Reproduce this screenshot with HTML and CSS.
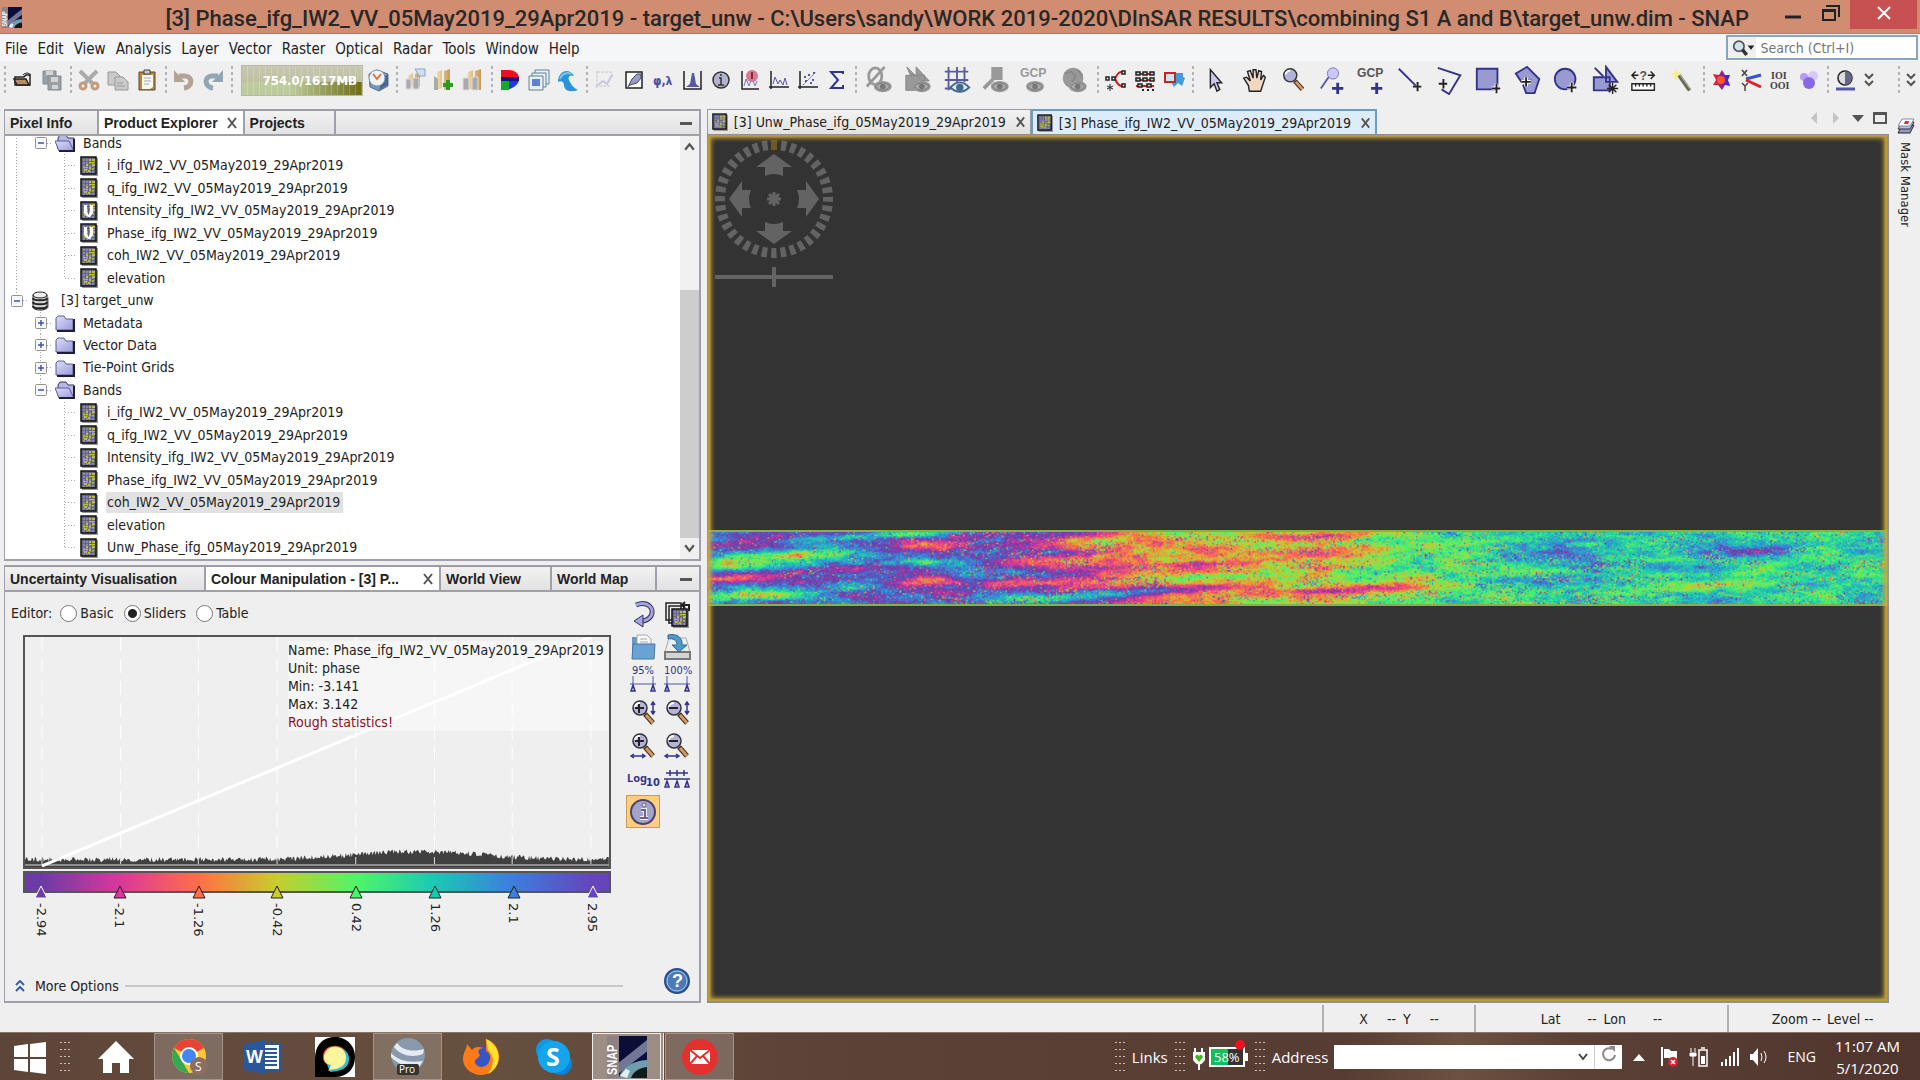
FILE: index.html
```html
<!DOCTYPE html>
<html lang="en">
<head>
    <meta charset="UTF-8">
    <meta name="viewport" content="width=device-width, initial-scale=1.0">
    <title>SNAP</title>
    <link rel="stylesheet" href="styles.css">
</head>
<body>
    <!-- Shared icons -->
    <svg class="defs" width="0" height="0">
        <defs>
            <linearGradient id="folderFill" x1="0" y1="0" x2="1" y2="1"><stop offset="0" stop-color="#dcdcff"/><stop offset="1" stop-color="#9a9ad8"/></linearGradient>
            <linearGradient id="wood" x1="0" x2="1"><stop offset="0" stop-color="#f4dcae"/><stop offset="1" stop-color="#c79a58"/></linearGradient>
            <linearGradient id="rainbow" x1="0" x2="1"><stop offset="0" stop-color="#f22"/><stop offset="1" stop-color="#22f"/></linearGradient>
            <pattern id="bandGrid" width="3" height="3" patternUnits="userSpaceOnUse"><rect width="3" height="3" fill="#66667a"/><rect width="2" height="2" fill="#8585b8"/></pattern>
            <symbol id="i-band" viewBox="0 0 18 20">
                <rect x="2" y="2" width="16" height="18" fill="#999"/>
                <rect x="1" y="1" width="15" height="17" fill="url(#bandGrid)" stroke="#111" stroke-width="1.500"/>
                <path d="M9 3h2v2h-2zM12 3h3v2h-3zM9 6h6v1H9zM12 8h3v2h-3zM6 8h2v2H6zM3 11h5v1H3zM9 11h2v2H9zM4 13h3v2H4zM8 14h2v2H8zM12 12h2v1h-2z" fill="#c4c430" opacity=".9"/>
            </symbol>
            <symbol id="i-vband" viewBox="0 0 18 20">
                <use href="#i-band" width="18" height="20"/>
                <path d="M4 4h3v7l1.500 3 1.500-3V4h3v8l-3 4H8l-4-4z" fill="#fff"/>
            </symbol>
            <symbol id="i-folder" viewBox="0 0 20 18">
                <path d="M1 16V4l2-2h6l2 3h7v11z" fill="url(#folderFill)" stroke="#5c5c90"/>
                <path d="M2 17h17V5" fill="none" stroke="#1d1d3c" stroke-width="2"/>
            </symbol>
            <symbol id="i-folder-open" viewBox="0 0 20 18">
                <path d="M3 15V4l2-3h6l2 3h6v12z" fill="#b9b9e6" stroke="#33335c"/>
                <path d="M0 7h14l5 10H4z" fill="url(#folderFill)" stroke="#5c5c90"/>
                <path d="M4 17h15V5" fill="none" stroke="#1d1d3c" stroke-width="2"/>
            </symbol>
            <symbol id="i-db" viewBox="0 0 18 20">
                <path d="M4 18c6 3 13 1 13-3V6z" fill="#aaa"/>
                <path d="M1 4v12c0 4 14 4 14 0V4z" fill="#d8d8d8" stroke="#222"/>
                <path d="M1 7c0 3 14 3 14 0M1 11c0 3 14 3 14 0M1 15c0 3 14 3 14 0" fill="none" stroke="#222" stroke-width="2"/>
                <ellipse cx="8" cy="4" rx="7" ry="3" fill="#eee" stroke="#222"/>
            </symbol>
            <symbol id="i-minus" viewBox="0 0 12 12"><rect x=".5" y=".5" width="11" height="11" rx="1" fill="#f8f8f8" stroke="#929292"/><path d="M3 6h6" stroke="#3b58a8" stroke-width="1.500"/></symbol>
            <symbol id="i-plus" viewBox="0 0 12 12"><rect x=".5" y=".5" width="11" height="11" rx="1" fill="#f8f8f8" stroke="#929292"/><path d="M3 6h6M6 3v6" stroke="#3b58a8" stroke-width="1.500"/></symbol>
            <symbol id="i-x" viewBox="0 0 12 12"><path d="M2 1l8 10M10 1L2 11" stroke="#555" stroke-width="2" fill="none"/></symbol>
            <symbol id="i-eye" viewBox="0 0 20 14">
                <ellipse cx="10" cy="7" rx="9.500" ry="6" fill="#9a9a9a"/><path d="M2 7q8-8 16 0q-8 8-16 0z" fill="#aaa" stroke="#777"/><circle cx="10" cy="7" r="3" fill="#777"/>
            </symbol>
            <symbol id="i-chev" viewBox="0 0 10 14"><path d="M1 1l4 4 4-4M1 8l4 4 4-4" fill="none" stroke="#555" stroke-width="2"/></symbol>
            <symbol id="i-lens" viewBox="0 0 26 28">
                <circle cx="10" cy="9" r="7" fill="#b3b3da" stroke="#333" stroke-width="1.500"/><path d="M5 8a5 5 0 015-4" stroke="#fff" stroke-width="2" fill="none"/>
                <path d="M15 15l8 9" stroke="#4a2c1a" stroke-width="5"/><path d="M16 16l7 8" stroke="#d09a68" stroke-width="3"/>
            </symbol>
            <symbol id="i-snap" viewBox="0 0 40 54">
                <rect width="40" height="54" fill="#0b0e38"/><rect width="12" height="54" fill="#8c8286"/>
                <path d="M12 34L40 5v15L12 48z" fill="#737795"/><path d="M12 54c2-13 14-22 28-23v23z" fill="#6f9eb0"/><path d="M24 54c2-8 8-13 16-14v14z" fill="#101c1c"/><path d="M13 51l6-9 4 3-3 9z" fill="#e4eeee"/>
                <text x="-50" y="10" transform="rotate(-90)" fill="#fff" font-family="Liberation Sans" font-size="14" font-weight="bold">SNAP</text>
            </symbol>
        </defs>
    </svg>

    <header class="titlebar">
        <svg class="title-icon" viewBox="0 0 40 54" preserveAspectRatio="none"><use href="#i-snap" width="40" height="54"/></svg>
        <h1>[3] Phase_ifg_IW2_VV_05May2019_29Apr2019 - target_unw - C:\Users\sandy\WORK 2019-2020\DInSAR RESULTS\combining S1 A and B\target_unw.dim - SNAP</h1>
        <div class="window-buttons">
            <button class="win" aria-label="Minimize"><svg width="18" height="20" viewBox="0 0 18 20"><path d="M1 14h16" stroke="#222" stroke-width="3"/></svg></button>
            <button class="win" aria-label="Restore"><svg width="20" height="18" viewBox="0 0 20 18"><path d="M2 6h12v10H2zM1 7h14M5 2h13v11" stroke="#222" stroke-width="2" fill="none"/></svg></button>
            <button class="win win-close" aria-label="Close"><svg width="16" height="14" viewBox="0 0 16 14"><path d="M2 1l12 12M14 1L2 13" stroke="#fff" stroke-width="2"/></svg></button>
        </div>
    </header>

    <nav class="menubar">
        <a href="#">File</a><a href="#">Edit</a><a href="#">View</a><a href="#">Analysis</a><a href="#">Layer</a><a href="#">Vector</a><a href="#">Raster</a><a href="#">Optical</a><a href="#">Radar</a><a href="#">Tools</a><a href="#">Window</a><a href="#">Help</a>
        <label class="search">
            <svg width="26" height="20" viewBox="0 0 26 20"><circle cx="8" cy="8" r="6" fill="#cfe2f2" stroke="#555" stroke-width="2"/><path d="M12 12l5 6" stroke="#333" stroke-width="4"/><path d="M18 7h8l-4 5z" fill="#222"/></svg>
            <input type="text" placeholder="Search (Ctrl+I)" aria-label="Search">
        </label>
    </nav>

    <div class="toolbar">
        <i class="sep"></i>
        <button aria-label="Open"><svg viewBox="0 0 24 24"><path d="M4 9h9l2-2h4v10H4z" fill="#eee" stroke="#222" stroke-width="1.500"/><path d="M3 11h12l3 6H6z" fill="#b88b62" stroke="#222" stroke-width="1.500"/><path d="M12 7q4-4 8 0" fill="none" stroke="#222"/></svg></button>
        <button aria-label="Save all"><svg viewBox="0 0 24 24"><g fill="#9aa0a6" stroke="#848a90"><path d="M3 3h13v13H3z"/><path d="M8 8h13v14H8z"/></g><path d="M6 3h7v4H6zM11 9h7v5h-7zM12 17h6v4h-6z" fill="#d2d4d6"/></svg></button>
        <i class="sep"></i>
        <button aria-label="Cut"><svg viewBox="0 0 24 24"><path d="M3 3l12 12M20 3L8 15" stroke="#aaa" stroke-width="4"/><g fill="none" stroke="#c49c7c" stroke-width="3"><circle cx="6" cy="18" r="3"/><circle cx="18" cy="18" r="3"/></g></svg></button>
        <button aria-label="Copy"><svg viewBox="0 0 24 24"><g fill="#c9c9c9" stroke="#989898"><path d="M2 4h8l4 4v9H2z"/><path d="M9 9h8l5 5v8H9z"/></g><path d="M11 15h6M11 18h8" stroke="#989898"/></svg></button>
        <button aria-label="Paste"><svg viewBox="0 0 24 24"><path d="M4 4h16v18H4z" fill="#b98d2c" stroke="#544"/><path d="M7 7h11v12l-3 2H7z" fill="#f6f6f2"/><path d="M9 2h6v4H9z" fill="#ccc" stroke="#444"/><path d="M9 10h7M9 13h7M9 16h5" stroke="#aaa"/></svg></button>
        <i class="sep"></i>
        <button aria-label="Undo"><svg viewBox="0 0 24 24"><path d="M7 8h6c8 0 8 11-1 12" fill="none" stroke="#b3a394" stroke-width="5"/><path d="M2 2v12h11z" fill="#b3a394"/></svg></button>
        <button aria-label="Redo"><svg viewBox="0 0 24 24"><path d="M17 8h-6c-8 0-8 11 1 12" fill="none" stroke="#91a8b4" stroke-width="5"/><path d="M22 2v12H11z" fill="#91a8b4"/></svg></button>
        <i class="sep"></i>
        <div class="memory">754.0/1617MB</div>
        <button aria-label="Profile"><svg viewBox="0 0 24 24"><path d="M3 6l8-4 11 4v12l-9 5-9-4z" fill="#7898bd" stroke="#4f6f96"/><path d="M13 22l9-5V6l-5 4z" fill="#46688f"/><circle cx="11" cy="10" r="8" fill="#eef3f8" stroke="#7d93ad"/><path d="M7 6l4 5 4-5" fill="none" stroke="#e0703a" stroke-width="2"/></svg></button>
        <i class="sep"></i>
        <button aria-label="Product library"><svg viewBox="0 0 24 24"><path d="M5 8l5-3v13l-5 4zM12 6l5-2v14l-5 4z" fill="url(#wood)"/><path d="M3 11h5v10H3zM10 10h6v11h-6z" fill="#aaa" stroke="#ddd"/><path d="M12 1h10v7h-6z" fill="#cfe0f6" stroke="#8aa4c8"/></svg></button>
        <button aria-label="Add product"><svg viewBox="0 0 24 24"><path d="M5 4l5-2v18l-5 2zM12 3l6-2v18l-6 3z" fill="url(#wood)"/><path d="M2 8l4 3v11H2z" fill="#aaa"/><path d="M16 12v10M11 17h10" stroke="#2c9a1c" stroke-width="4"/></svg></button>
        <button aria-label="Products"><svg viewBox="0 0 24 24"><path d="M7 4l5-2v19H5zM14 3l6-2v21h-7z" fill="url(#wood)"/><path d="M2 10h6v12H2zM11 9h6v13h-6z" fill="#aaa" stroke="#ddd"/></svg></button>
        <i class="sep"></i>
        <button aria-label="RGB"><svg viewBox="0 0 24 24"><path d="M3 2h8c6 0 10 4 10 8H3z" fill="#e8121c"/><path d="M9 11h12c0 5-5 9-12 11z" fill="#1d39d8"/><path d="M3 11h8v11H3z" fill="#18a82c"/><path d="M3 9h18v4H3z" fill="#16177a"/></svg></button>
        <button aria-label="Image stack"><svg viewBox="0 0 24 24"><g fill="#e8f0f4" stroke="#5f8394"><path d="M8 2h14v14H8z"/><path d="M5 5h14v14H5z"/><path d="M2 8h14v14H2z"/></g><path d="M5 11h8v7H5z" fill="#5d80da"/></svg></button>
        <button aria-label="Wave"><svg viewBox="0 0 24 24"><path d="M2 14C2 3 13-1 18 8c-5-2-7 2-4 6 2 4 4 6 8 8-9 3-14 0-14-5 0-3-3-5-6-3z" fill="#2c93d4"/><path d="M4 11c2-6 8-7 11-5" fill="none" stroke="#7cc4ee" stroke-width="2"/></svg></button>
        <i class="sep"></i>
        <button aria-label="Profile plot"><svg viewBox="0 0 24 24"><path d="M4 3v17M2 18h15M4 4h14l2 5" fill="none" stroke="#c4c4ce" stroke-dasharray="3 1"/><path d="M5 17l5-4 4 3 5-9" fill="none" stroke="#c8c8dc" stroke-width="2"/></svg></button>
        <button aria-label="Spectrum"><svg viewBox="0 0 24 24"><path d="M4 4h16v16H4z" fill="#fff" stroke="#222" stroke-width="1.500"/><path d="M6 19l4-8 5-5h4v4l-4 5-7 2z" fill="#9c9cc4" stroke="#446"/></svg></button>
        <button aria-label="Geo coding"><svg viewBox="0 0 24 24"><text x="2" y="17" class="glyph">φ,λ</text></svg></button>
        <button aria-label="Histogram"><svg viewBox="0 0 24 24"><path d="M4 3v18h17V3M4 21h17" fill="none" stroke="#222" stroke-width="1.500"/><path d="M6 19l4-3 2-11h2l2 11 4 3z" fill="#5858a8"/></svg></button>
        <button aria-label="Information"><svg viewBox="0 0 24 24"><circle cx="12" cy="12" r="8" fill="#b3b3cc" stroke="#333" stroke-width="1.500"/><path d="M12 6v2M10 10h2v7M9 17h6" stroke="#333" stroke-width="1.500" fill="none"/></svg></button>
        <button aria-label="Density plot"><svg viewBox="0 0 24 24"><path d="M4 3v18h17" fill="none" stroke="#222" stroke-width="1.500"/><path d="M6 18l2-7 3 7 3-8 3 8 2-5" fill="none" stroke="#77b"/><circle cx="14" cy="8" r="6" fill="#d9798f"/><path d="M14 4v7" stroke="#8d2438" stroke-width="2"/></svg></button>
        <button aria-label="Line plot"><svg viewBox="0 0 24 24"><path d="M4 3v18M2 19h20" fill="none" stroke="#222" stroke-width="1.500"/><path d="M6 16l2-7 3 7 2-4 3 5 2-7 2 7" fill="none" stroke="#55a"/></svg></button>
        <button aria-label="Scatter plot"><svg viewBox="0 0 24 24"><path d="M4 3v18M2 19h20" fill="none" stroke="#222" stroke-width="1.500"/><path d="M7 17L20 4" stroke="#55a" stroke-dasharray="2 1"/><path d="M8 9h2M12 7h2M16 12h2M14 15h2M17 5h2M9 13h2" stroke="#55a" stroke-width="2"/></svg></button>
        <button aria-label="Statistics"><svg viewBox="0 0 24 24"><path d="M18 6V4H6l7 8-7 8h12v-3" fill="none" stroke="#33338c" stroke-width="2"/></svg></button>
        <i class="sep"></i>
        <button class="lg" aria-label="No data overlay"><svg viewBox="0 0 32 32"><ellipse cx="12" cy="12" rx="7" ry="9" fill="none" stroke="#999" stroke-width="3"/><path d="M3 23L22 2" stroke="#999" stroke-width="3"/><use href="#i-eye" x="10" y="16" width="20" height="14"/></svg></button>
        <button class="lg" aria-label="Shapes overlay"><svg viewBox="0 0 32 32"><path d="M3 11h20v16H3zM14 11V2l14 15h-8zM4 2l9 9H8z" fill="#999" stroke="#888"/><use href="#i-eye" x="10" y="16" width="20" height="14"/></svg></button>
        <button class="lg" aria-label="Graticule overlay"><svg viewBox="0 0 32 32"><path d="M7 2v25M16 2v16M24 2v16M3 7h25M3 16h25M3 25h8" stroke="#5a5a9c" stroke-width="2"/><path d="M9 24q10-11 20 0q-10 9-20 0z" fill="#e4eaf2" stroke="#456a90" stroke-width="2"/><circle cx="19" cy="24" r="4" fill="#456a90"/></svg></button>
        <button class="lg" aria-label="Pin overlay"><svg viewBox="0 0 32 32"><path d="M13 4h8v10h-8zM13 15L3 25" fill="#999" stroke="#999" stroke-width="4"/><use href="#i-eye" x="10" y="16" width="20" height="14"/></svg></button>
        <button class="lg" aria-label="GCP overlay"><svg viewBox="0 0 32 32"><text x="0" y="13" class="gcp dim">GCP</text><use href="#i-eye" x="6" y="16" width="20" height="14"/></svg></button>
        <button class="lg" aria-label="World overlay"><svg viewBox="0 0 32 32"><circle cx="15" cy="14" r="11" fill="#999"/><path d="M6 9l7-2 5 5-4 6M20 5l5 7" fill="none" stroke="#888" stroke-width="2"/><use href="#i-eye" x="10" y="16" width="20" height="14"/></svg></button>
        <i class="sep"></i>
        <button aria-label="Graph builder"><svg viewBox="0 0 24 24"><path d="M11 11q3-8 7-7M11 11q3 7 7 7" fill="none" stroke="#c22" stroke-width="2"/><path d="M2 9h3v3H2zM8 9h3v3H8zM18 3h3v3h-3zM18 16h3v3h-3z" fill="#fff" stroke="#222" stroke-width="1.500"/><path d="M6 16v7M3 18l6 3M9 18l-6 3" stroke="#222"/></svg></button>
        <button aria-label="Batch processing"><svg viewBox="0 0 24 24"><path d="M3 6h18M3 12h18M3 18h18" stroke="#c22" stroke-width="2"/><path d="M3 4h4v3H3zM10 4h4v3h-4zM17 4h4v3h-4zM3 10h4v3H3zM10 10h4v3h-4zM17 10h4v3h-4zM5 16h4v3H5zM14 16h4v3h-4z" fill="#ccc" stroke="#222" stroke-width="1.500"/><path d="M9 22h2M14 22h2M19 22h2" stroke="#222" stroke-width="2"/></svg></button>
        <button aria-label="Subset"><svg viewBox="0 0 24 24"><path d="M8 5h13v4l2 1-3 8-4-3-4 4-3-5z" fill="#3b9ee0"/><path d="M3 5h10v9H3z" fill="#cfe3f6" stroke="#c22" stroke-width="2"/></svg></button>
        <i class="sep"></i>
        <button class="lg" aria-label="Select"><svg viewBox="0 0 32 32"><path d="M10 5v19l4-4 3 8 3-2-3-7h5z" fill="#c9c9ee" stroke="#222" stroke-width="1.500"/></svg></button>
        <button class="lg" aria-label="Pan"><svg viewBox="0 0 32 32"><path d="M10 28l-1-6-5-8 3-1 4 4-3-10 3-1 3 8V5h3l1 9 2-8 3 1-1 9 3-5 2 2-3 9-2 6z" fill="#f0d8c4" stroke="#222" stroke-width="1.500"/></svg></button>
        <button class="lg" aria-label="Zoom"><svg viewBox="0 0 32 32"><use href="#i-lens" x="2" y="2" width="26" height="28"/></svg></button>
        <button class="lg" aria-label="Pin"><svg viewBox="0 0 32 32"><path d="M12 12L3 25" stroke="#55a" stroke-width="2"/><circle cx="16" cy="9" r="6" fill="#c9c9ff" stroke="#77b"/><path d="M15 25h12M21 19v12" stroke="#33338c" stroke-width="3"/></svg></button>
        <button class="lg" aria-label="GCP"><svg viewBox="0 0 32 32"><text x="0" y="13" class="gcp">GCP</text><path d="M15 25h12M21 19v12" stroke="#33338c" stroke-width="3"/></svg></button>
        <button class="lg" aria-label="Line"><svg viewBox="0 0 32 32"><path d="M3 4l18 18" stroke="#33338c" stroke-width="2"/><path d="M18 23h9M23 18v10" stroke="#222" stroke-width="2"/></svg></button>
        <button class="lg" aria-label="Polyline"><svg viewBox="0 0 32 32"><path d="M3 3l24 8-12 20-8-5" fill="none" stroke="#33338c" stroke-width="2"/><path d="M4 20h9M9 15v10" stroke="#222" stroke-width="2"/></svg></button>
        <button class="lg" aria-label="Rectangle"><svg viewBox="0 0 32 32"><path d="M3 4h22v22H3z" fill="#9a9ad2" stroke="#33338c" stroke-width="2"/><path d="M19 25h10M24 20v10" stroke="#fff" stroke-width="4"/><path d="M19 25h9M24 20v10" stroke="#222" stroke-width="2"/></svg></button>
        <button class="lg" aria-label="Polygon"><svg viewBox="0 0 32 32"><path d="M3 9L15 2l13 13-5 15h-9l-3-8 6-5-8 1z" fill="#9a9ad2" stroke="#33338c" stroke-width="2"/><path d="M9 18h10M14 13v10" stroke="#fff" stroke-width="4"/><path d="M9 18h10M14 13v10" stroke="#222" stroke-width="2"/></svg></button>
        <button class="lg" aria-label="Ellipse"><svg viewBox="0 0 32 32"><circle cx="14" cy="15" r="11" fill="#9a9ad2" stroke="#33338c" stroke-width="2"/><path d="M16 24h10M21 19v10" stroke="#fff" stroke-width="4"/><path d="M16 24h10M21 19v10" stroke="#222" stroke-width="2"/></svg></button>
        <button class="lg" aria-label="New container"><svg viewBox="0 0 32 32"><path d="M3 13h17v14H3zM16 2l12 16H16zM4 3l9 9" fill="#9a9ad2" stroke="#33338c" stroke-width="2"/><path d="M17 25h12M23 19v12M19 21l8 8M27 21l-8 8" stroke="#222" stroke-width="1.500"/></svg></button>
        <button class="lg" aria-label="Range finder"><svg viewBox="0 0 32 32"><path d="M2 20h24v7H2zM6 20v3M10 20v3M14 20v3M18 20v3M22 20v3" fill="#fff" stroke="#222" stroke-width="1.500"/><path d="M2 11h7M6 7l-4 4 4 4M26 11h-7M22 7l4 4-4 4" fill="none" stroke="#222" stroke-width="1.500"/><text x="10" y="16" class="gcp">?</text></svg></button>
        <button class="lg" aria-label="Magic wand"><svg viewBox="0 0 32 32"><path d="M10 10l12 17" stroke="#686858" stroke-width="4"/><path d="M12 11l11 15" stroke="#c6c6aa"/><path d="M7 2l2 5 5 2-5 3-1 5-3-5-4-2 5-2z" fill="#f8f090"/></svg></button>
        <i class="sep tight"></i>
        <button aria-label="Sun"><svg viewBox="0 0 24 24"><path d="M12 2l3 5h5l-2 5 2 6-5-1-3 5-4-5H3l3-5-3-6 6 1z" fill="url(#rainbow)"/><circle cx="11" cy="12" r="4" fill="#f52"/></svg></button>
        <button aria-label="XY"><svg viewBox="0 0 24 24"><path d="M7 11l15-4" stroke="#35c" stroke-width="3"/><path d="M7 12l15 7" stroke="#d22" stroke-width="3"/><path d="M3 2l5 6M8 2L3 8M3 15l3 3 3-3M6 18v5" fill="none" stroke="#444" stroke-width="1.500"/></svg></button>
        <button aria-label="Binary"><svg viewBox="0 0 24 24"><text x="3" y="11" class="bits">IOI</text><text x="2" y="21" class="bits">OOI</text></svg></button>
        <button aria-label="Clusters"><svg viewBox="0 0 24 24"><circle cx="7" cy="9" r="4" fill="#b49cf8"/><circle cx="16" cy="8" r="5" fill="#d8c8fa"/><circle cx="12" cy="15" r="6" fill="#8868e4"/></svg></button>
        <i class="sep"></i>
        <button aria-label="Layer"><svg viewBox="0 0 24 24"><circle cx="11" cy="10" r="7" fill="#ddd" stroke="#222" stroke-width="1.500"/><path d="M11 3a7 7 0 010 14z" fill="#668"/><path d="M2 21h19" stroke="#55a" stroke-width="3"/></svg></button>
        <button class="more" aria-label="More"><svg viewBox="0 0 10 14"><use href="#i-chev" width="10" height="14"/></svg></button>
        <i class="sep last"></i>
        <button class="more" aria-label="More tools"><svg viewBox="0 0 10 14"><use href="#i-chev" width="10" height="14"/></svg></button>
    </div>

    <main class="workspace">
        <div class="sidebar">
            <section class="panel">
                <div class="tabs">
                    <button class="tab tab-pixel">Pixel Info</button>
                    <button class="tab active">Product Explorer <svg width="12" height="12"><use href="#i-x"/></svg></button>
                    <button class="tab tab-projects">Projects</button>
                    <span class="tab-fill"></span>
                    <button class="minimize" aria-label="Minimize panel"></button>
                </div>
                <div class="tree-wrap">
                    <ul class="tree">
                        <li><b class="v"></b><b class="l"><svg class="ex"><use href="#i-minus"/></svg></b><b><svg class="fo"><use href="#i-folder-open"/></svg></b><span>Bands</span></li>
                        <li><b class="v"></b><b></b><b class="t"></b><b><svg class="bd"><use href="#i-band"/></svg></b><span>i_ifg_IW2_VV_05May2019_29Apr2019</span></li>
                        <li><b class="v"></b><b></b><b class="t"></b><b><svg class="bd"><use href="#i-band"/></svg></b><span>q_ifg_IW2_VV_05May2019_29Apr2019</span></li>
                        <li><b class="v"></b><b></b><b class="t"></b><b><svg class="bd"><use href="#i-vband"/></svg></b><span>Intensity_ifg_IW2_VV_05May2019_29Apr2019</span></li>
                        <li><b class="v"></b><b></b><b class="t"></b><b><svg class="bd"><use href="#i-vband"/></svg></b><span>Phase_ifg_IW2_VV_05May2019_29Apr2019</span></li>
                        <li><b class="v"></b><b></b><b class="t"></b><b><svg class="bd"><use href="#i-band"/></svg></b><span>coh_IW2_VV_05May2019_29Apr2019</span></li>
                        <li><b class="v"></b><b></b><b class="l"></b><b><svg class="bd"><use href="#i-band"/></svg></b><span>elevation</span></li>
                        <li><b class="l"><svg class="ex"><use href="#i-minus"/></svg></b><b><svg class="bd"><use href="#i-db"/></svg></b><span class="root">[3] target_unw</span></li>
                        <li><b></b><b class="t"><svg class="ex"><use href="#i-plus"/></svg></b><b><svg class="fo"><use href="#i-folder"/></svg></b><span>Metadata</span></li>
                        <li><b></b><b class="t"><svg class="ex"><use href="#i-plus"/></svg></b><b><svg class="fo"><use href="#i-folder"/></svg></b><span>Vector Data</span></li>
                        <li><b></b><b class="t"><svg class="ex"><use href="#i-plus"/></svg></b><b><svg class="fo"><use href="#i-folder"/></svg></b><span>Tie-Point Grids</span></li>
                        <li><b></b><b class="l"><svg class="ex"><use href="#i-minus"/></svg></b><b><svg class="fo"><use href="#i-folder-open"/></svg></b><span>Bands</span></li>
                        <li><b></b><b></b><b class="t"></b><b><svg class="bd"><use href="#i-band"/></svg></b><span>i_ifg_IW2_VV_05May2019_29Apr2019</span></li>
                        <li><b></b><b></b><b class="t"></b><b><svg class="bd"><use href="#i-band"/></svg></b><span>q_ifg_IW2_VV_05May2019_29Apr2019</span></li>
                        <li><b></b><b></b><b class="t"></b><b><svg class="bd"><use href="#i-band"/></svg></b><span>Intensity_ifg_IW2_VV_05May2019_29Apr2019</span></li>
                        <li><b></b><b></b><b class="t"></b><b><svg class="bd"><use href="#i-band"/></svg></b><span>Phase_ifg_IW2_VV_05May2019_29Apr2019</span></li>
                        <li><b></b><b></b><b class="t"></b><b><svg class="bd"><use href="#i-band"/></svg></b><span class="selected">coh_IW2_VV_05May2019_29Apr2019</span></li>
                        <li><b></b><b></b><b class="t"></b><b><svg class="bd"><use href="#i-band"/></svg></b><span>elevation</span></li>
                        <li><b></b><b></b><b class="l"></b><b><svg class="bd"><use href="#i-band"/></svg></b><span>Unw_Phase_ifg_05May2019_29Apr2019</span></li>
                    </ul>
                    <div class="scrollbar">
                        <svg viewBox="0 0 12 10"><path d="M2 8l4-5 4 5" fill="none" stroke="#555" stroke-width="2"/></svg>
                        <div class="thumb"></div>
                        <svg viewBox="0 0 12 10"><path d="M2 2l4 5 4-5" fill="none" stroke="#555" stroke-width="2"/></svg>
                    </div>
                </div>
            </section>

            <section class="panel colour">
                <div class="tabs">
                    <button class="tab tab-uncertainty">Uncertainty Visualisation</button>
                    <button class="tab active tab-colour">Colour Manipulation - [3] P... <svg width="12" height="12"><use href="#i-x"/></svg></button>
                    <button class="tab tab-view">World View</button>
                    <button class="tab tab-map">World Map</button>
                    <span class="tab-fill"></span>
                    <button class="minimize" aria-label="Minimize panel"></button>
                </div>
                <div class="colour-body">
                    <div class="colour-main">
                        <div class="editor-row">
                            <span>Editor:</span>
                            <label><input type="radio" name="editor">Basic</label>
                            <label><input type="radio" name="editor" checked>Sliders</label>
                            <label><input type="radio" name="editor">Table</label>
                        </div>
                        <div class="chart">
                            <svg class="plot" viewBox="0 0 586 230" preserveAspectRatio="none">
                                <path id="grid" d="M17 0v230M96 0v230M174 0v230M253 0v230M332 0v230M411 0v230M489 0v230M568 0v230" stroke="#fff" stroke-width="1" stroke-dasharray="14 8"/>
                                <path id="hist" fill="#404040"/>
                                <path d="M0 228h586M17 220v7M96 220v7M174 220v7M253 220v7M332 220v7M411 220v7M489 220v7M568 220v7" stroke="#ddd"/>
                                <path d="M17 229L568 0" stroke="#fff" stroke-width="3"/>
                            </svg>
                            <div class="stats">
                                <p>Name: Phase_ifg_IW2_VV_05May2019_29Apr2019</p>
                                <p>Unit: phase</p>
                                <p>Min: -3.141</p>
                                <p>Max: 3.142</p>
                                <p class="rough">Rough statistics!</p>
                            </div>
                        </div>
                        <div class="ramp"></div>
                        <div class="markers">
                            <div class="edge"><svg viewBox="0 0 16 16"><path d="M8 2l6 12H2z" fill="#6d3ba8"/></svg>-2.94</div>
                            <div><svg viewBox="0 0 16 16"><path d="M8 2l6 12H2z" fill="#d8379c"/></svg>-2.1</div>
                            <div><svg viewBox="0 0 16 16"><path d="M8 2l6 12H2z" fill="#ff7046"/></svg>-1.26</div>
                            <div><svg viewBox="0 0 16 16"><path d="M8 2l6 12H2z" fill="#c8cc30"/></svg>-0.42</div>
                            <div><svg viewBox="0 0 16 16"><path d="M8 2l6 12H2z" fill="#50f468"/></svg>0.42</div>
                            <div><svg viewBox="0 0 16 16"><path d="M8 2l6 12H2z" fill="#1cc8b4"/></svg>1.26</div>
                            <div><svg viewBox="0 0 16 16"><path d="M8 2l6 12H2z" fill="#3c80dc"/></svg>2.1</div>
                            <div class="edge"><svg viewBox="0 0 16 16"><path d="M8 2l6 12H2z" fill="#6446b8"/></svg>2.95</div>
                        </div>
                        <div class="more-options">
                            <svg width="10" height="12" viewBox="0 0 10 12"><path d="M1 5l4-4 4 4M1 11l4-4 4 4" fill="none" stroke="#3a5fa0" stroke-width="2"/></svg>
                            <span>More Options</span><hr>
                        </div>
                    </div>
                    <div class="colour-tools">
                        <button aria-label="Reset"><svg viewBox="0 0 28 28"><path d="M7 5c12-5 19 4 15 11-2 3-5 5-10 5" fill="none" stroke="#333360" stroke-width="5"/><path d="M7 5c12-5 19 4 15 11-2 3-5 5-10 5" fill="none" stroke="#a4a4e0" stroke-width="3"/><path d="M14 15v12L5 21z" fill="#a4a4e0" stroke="#333360"/></svg></button>
                        <button aria-label="Apply to others"><svg viewBox="0 0 28 28"><path d="M3 3h15v17H3zM6 6h15v17H6z" fill="#eee" stroke="#222" stroke-width="1.500"/><use href="#i-band" x="8" y="8" width="18" height="20"/><path d="M19 5h7v6M22 2l-3 3 3 3" fill="none" stroke="#222" stroke-width="2"/></svg></button>
                        <button aria-label="Import"><svg viewBox="0 0 28 28"><path d="M3 4h9v22H3z" fill="#6598c4"/><path d="M8 2h10l4 4v12H8z" fill="#f6f6f6" stroke="#aaa"/><path d="M11 6h7M11 9h8" stroke="#aaa"/><path d="M4 11h22l-1 15H3z" fill="#69a3d4" stroke="#4479a8"/></svg></button>
                        <button aria-label="Export"><svg viewBox="0 0 28 28"><path d="M6 5h17l4 14H2z" fill="#eee" stroke="#aaa"/><path d="M2 19h25v7H2z" fill="#d4d4d4" stroke="#777" stroke-width="2"/><path d="M5 2c8-2 15 2 14 10h5l-8 7-7-7h5c0-5-4-7-9-6z" fill="#4f9ac8" stroke="#2e6c98"/></svg></button>
                        <button aria-label="Stretch 95%"><svg viewBox="0 0 28 28"><text x="3" y="8" class="tiny">95%</text><path d="M1 18h26M4 10v8M24 10v8" stroke="#55a"/><path d="M4 19l2 6H2zM24 19l2 6h-4z" fill="#ccf" stroke="#33338c" stroke-width="1.500"/></svg></button>
                        <button aria-label="Stretch 100%"><svg viewBox="0 0 28 28"><text x="1" y="8" class="tiny">100%</text><path d="M1 18h26M4 10v8M24 10v8" stroke="#55a"/><path d="M4 19l2 6H2zM24 19l2 6h-4z" fill="#ccf" stroke="#33338c" stroke-width="1.500"/></svg></button>
                        <button aria-label="Zoom in vertically"><svg viewBox="0 0 28 28"><use href="#i-lens" x="0" y="0" width="28" height="28"/><path d="M6 9h9M10 5v9" stroke="#222" stroke-width="2"/><path d="M24 3v12M22 6l2-3 2 3M22 12l2 3 2-3" stroke="#33338c" stroke-width="1.500" fill="none"/></svg></button>
                        <button aria-label="Zoom out vertically"><svg viewBox="0 0 28 28"><use href="#i-lens" x="0" y="0" width="28" height="28"/><path d="M6 9h9" stroke="#222" stroke-width="2"/><path d="M24 3v12M22 6l2-3 2 3M22 12l2 3 2-3" stroke="#33338c" stroke-width="1.500" fill="none"/></svg></button>
                        <button aria-label="Zoom in horizontally"><svg viewBox="0 0 28 28"><use href="#i-lens" x="0" y="0" width="28" height="28"/><path d="M6 9h9M10 5v9" stroke="#222" stroke-width="2"/><path d="M3 24h12M5 22l-3 2 3 2M13 22l3 2-3 2" stroke="#33338c" stroke-width="1.500" fill="none"/></svg></button>
                        <button aria-label="Zoom out horizontally"><svg viewBox="0 0 28 28"><use href="#i-lens" x="0" y="0" width="28" height="28"/><path d="M6 9h9" stroke="#222" stroke-width="2"/><path d="M3 24h12M5 22l-3 2 3 2M13 22l3 2-3 2" stroke="#33338c" stroke-width="1.500" fill="none"/></svg></button>
                        <button aria-label="Log scale"><svg viewBox="0 0 28 28"><text x="-2" y="17" class="log">Log</text><text x="17" y="21" class="tiny strong">10</text></svg></button>
                        <button aria-label="Distribute evenly"><svg viewBox="0 0 28 28"><path d="M3 8h22M1 14h26M7 5v6M14 5v6M21 5v6" stroke="#33338c" stroke-width="1.500"/><path d="M4 16l2 6H2zM14 16l2 6h-4zM24 16l2 6h-4z" fill="#ccf" stroke="#33338c" stroke-width="1.500"/></svg></button>
                        <button class="on" aria-label="Show information"><svg viewBox="0 0 28 28"><circle cx="14" cy="14" r="12" fill="#a3a3cc" stroke="#44446c" stroke-width="2"/><path d="M12 12h4v8M11 20h8" fill="none" stroke="#eee" stroke-width="4"/><path d="M12 12h4v8M11 20h8" fill="none" stroke="#66668c" stroke-width="2"/><circle cx="15" cy="7" r="2" fill="#ddd" stroke="#66668c"/></svg></button>
                        <button class="help" aria-label="Help"><svg viewBox="0 0 28 28"><circle cx="14" cy="14" r="12" fill="#4b7ab8" stroke="#25508c" stroke-width="2"/><circle cx="14" cy="14" r="10" fill="none" stroke="#a8c4e4"/><text x="9" y="20" class="q">?</text></svg></button>
                    </div>
                </div>
            </section>
        </div>

        <section class="editor">
            <div class="doc-tabs">
                <button class="doc-tab"><svg width="16" height="18"><use href="#i-band"/></svg><span>[3] Unw_Phase_ifg_05May2019_29Apr2019</span><svg width="11" height="12"><use href="#i-x"/></svg></button>
                <button class="doc-tab active"><svg width="16" height="18"><use href="#i-band"/></svg><span>[3] Phase_ifg_IW2_VV_05May2019_29Apr2019</span><svg width="11" height="12"><use href="#i-x"/></svg></button>
                <div class="doc-nav">
                    <svg viewBox="0 0 14 14"><path d="M10 1v12L4 7z" fill="#c4c4c4"/></svg>
                    <svg viewBox="0 0 14 14"><path d="M4 1v12l6-6z" fill="#c4c4c4"/></svg>
                    <svg viewBox="0 0 14 14"><path d="M1 4h12l-6 7z" fill="#555"/></svg>
                    <svg viewBox="0 0 14 14"><path d="M1 2h12v10H1zM1 3h12" fill="none" stroke="#555" stroke-width="2"/></svg>
                </div>
            </div>
            <div class="view">
                <svg class="compass" viewBox="0 0 120 150">
                    <circle cx="60" cy="60" r="54" fill="none" stroke="#636363" stroke-width="10" stroke-dasharray="5.400 4.025" stroke-dashoffset="2.700"/>
                    <path d="M57 1h6v10h-6z" fill="#6c5a20"/>
                    <g fill="#636363">
                        <path id="arrow" d="M60 15L78 28h-9v9q-9-4-18 0v-9h-9z"/>
                        <use href="#arrow" transform="rotate(90 60 60)"/><use href="#arrow" transform="rotate(180 60 60)"/><use href="#arrow" transform="rotate(270 60 60)"/>
                        <circle cx="60" cy="60" r="5"/>
                    </g>
                    <path d="M60 53v14M53 60h14M55 55l10 10M65 55L55 65" stroke="#636363" stroke-width="3"/>
                    <path d="M1 138h118M60 128v20" stroke="#636363" stroke-width="4"/>
                </svg>
                <canvas id="phase" width="840" height="53"></canvas>
            </div>
        </section>

        <aside class="dock">
            <svg width="18" height="16" viewBox="0 0 18 16"><path d="M5 7h12l-4 8H1z" fill="#99b" stroke="#223"/><path d="M5 4h12l-4 7H1z" fill="#bbd" stroke="#334"/><path d="M5 1h12l-4 7H1z" fill="#fff" stroke="#88a"/><path d="M8 3h4l-1 3H7z" fill="#e22"/></svg>
            <span>Mask Manager</span>
        </aside>
    </main>

    <footer class="statusbar">
        <div class="cell xy"><span>X</span><span>--</span><span>Y</span><span>--</span></div>
        <div class="cell latlon"><span>Lat</span><span>--</span><span>Lon</span><span>--</span></div>
        <div class="cell zoom"><span>Zoom --</span><span>Level --</span></div>
    </footer>

    <div class="taskbar">
        <button class="start" aria-label="Start"><svg width="34" height="34" viewBox="0 0 34 34"><path d="M1 5l14-2v13H1zM17 3l16-2v15H17zM1 18h14v13L1 29zM17 18h16v15l-16-2z" fill="#fff"/></svg></button>
        <i class="grip"></i>
        <button class="task" aria-label="Home"><svg width="38" height="34" viewBox="0 0 38 34"><path d="M19 1l18 18h-5v14h-9V23h-8v10H6V19H1z" fill="#fff"/></svg></button>
        <button class="task running" aria-label="Chrome"><svg width="38" height="38" viewBox="0 0 38 38"><circle cx="19" cy="18" r="17" fill="#fcc934"/><path d="M19 18L4 10A17 17 0 0134 10z" fill="#ea4335"/><path d="M4 10l8 13 7 12A17 17 0 014 10z" fill="#34a853"/><circle cx="19" cy="18" r="8" fill="#4285f4" stroke="#fff" stroke-width="2"/><circle cx="29" cy="28" r="9" fill="#8d6e63"/><text x="25" y="33" class="badge">S</text></svg></button>
        <button class="task" aria-label="Word"><svg width="38" height="36" viewBox="0 0 38 36"><path d="M20 5h17v26H20z" fill="#fff" stroke="#2b579a" stroke-width="2"/><path d="M22 10h12M22 14h12M22 18h12M22 22h12M22 26h12" stroke="#2b579a" stroke-width="2"/><path d="M1 5l21-4v34L1 31z" fill="#2b579a"/><text x="3" y="24" class="word">W</text></svg></button>
        <button class="task" aria-label="Chat"><svg width="40" height="40" viewBox="0 0 40 40"><path d="M0 0h40v40H0z" fill="#fff"/><path d="M0 22C0 7 9 0 20 0s20 8 20 20-8 20-20 20H0z" fill="#000"/><path d="M8 20c0-15 24-15 24 0 0 10-9 13-19 14l2-5c-5-2-7-5-7-9z" fill="#f15a3c"/><path d="M10 22c0-15 24-15 24 0 0 10-9 12-19 13z" fill="#2cc4d0"/><path d="M9 21c0-15 22-15 22 0 0 9-8 11-17 12l2-5c-5-1-7-4-7-7z" fill="#fff59c"/></svg></button>
        <button class="task running" aria-label="Google Earth Pro"><svg width="38" height="40" viewBox="0 0 38 40"><circle cx="19" cy="18" r="17" fill="#8899ae"/><path d="M8 6c6 8 16 9 27 6l-1 5c-10 4-22 2-29-7zM2 16c8 8 18 10 32 8l-4 6C18 32 8 26 2 20z" fill="#e6ebf2"/><rect x="8" y="27" width="22" height="11" rx="2" fill="#333"/><text x="10" y="36" class="pro">Pro</text></svg></button>
        <button class="task" aria-label="Firefox"><svg width="38" height="38" viewBox="0 0 38 38"><circle cx="19" cy="21" r="13" fill="#3556c4"/><path d="M5 6l5 6c4-4 8-3 11-2-5 1-6 4-3 7-2 4-6 4-5 8 4 7 14 4 15-4 1-6-4-8-4-8V1c10 3 14 13 13 20-1 9-9 16-18 16S1 30 1 21C1 14 5 11 5 6z" fill="#ff7b18"/><path d="M24 1c11 5 14 15 12 23-2 6-6 10-10 12 6-9 7-17 0-24z" fill="#ffe22e"/></svg></button>
        <button class="task" aria-label="Skype"><svg width="38" height="38" viewBox="0 0 38 38"><circle cx="12" cy="12" r="11" fill="#1098e0"/><circle cx="26" cy="26" r="11" fill="#0a84d4"/><circle cx="19" cy="19" r="16" fill="#14a5ec"/><text x="11" y="28" class="skype">S</text></svg></button>
        <button class="task running current" aria-label="SNAP"><svg width="40" height="42" viewBox="0 0 40 54" preserveAspectRatio="none"><use href="#i-snap" width="40" height="54"/></svg></button>
        <button class="task running" aria-label="Mail"><svg width="38" height="38" viewBox="0 0 38 38"><circle cx="19" cy="19" r="18" fill="#e53030"/><path d="M9 12h20v14H9z" fill="#fff"/><path d="M9 12l10 8 10-8M9 26l7-8M29 26l-7-8" fill="none" stroke="#e53030" stroke-width="2"/></svg></button>

        <div class="tray">
            <i class="grip"></i>
            <span class="band">Links</span>
            <i class="grip"></i>
            <svg class="battery" width="56" height="36" viewBox="0 0 56 36"><path d="M3 9v5M10 9v5M7 24v7" stroke="#fff" stroke-width="2"/><path d="M1 13h12v8q-6 9-12 0z" fill="#fff"/><path d="M7 23l-4-5q2-4 4-1 2-3 4 1z" fill="#3db818"/><path d="M18 9h34v18H18z" fill="#333" stroke="#fff" stroke-width="2"/><path d="M19 10h17v16H19z" fill="#0fbf5a"/><path d="M53 14h3v8h-3z" fill="#fff"/><text x="22" y="23" class="pct">58%</text><circle cx="48" cy="6" r="5" fill="#f01020"/></svg>
            <i class="grip"></i>
            <label class="band" for="address">Address</label>
            <div class="address"><input id="address" type="text"><svg width="12" height="10" viewBox="0 0 12 10"><path d="M2 2l4 5 4-5" fill="none" stroke="#444" stroke-width="2"/></svg><button aria-label="Refresh"><svg width="16" height="18" viewBox="0 0 16 18"><path d="M11 3a6 6 0 103 6" fill="none" stroke="#888" stroke-width="2"/><path d="M8 0h6v6z" fill="#888"/></svg></button></div>
            <div class="tray-icons">
                <svg viewBox="0 0 20 22"><path d="M10 8l6 7H4z" fill="#fff"/></svg>
                <svg viewBox="0 0 20 22"><path d="M3 1v19" stroke="#fff" stroke-width="2"/><path d="M5 3h5l2 2h6v9h-6l-2-2H5z" fill="#fff"/><circle cx="14" cy="16" r="5" fill="#d8202c"/><path d="M12 14l4 4M16 14l-4 4" stroke="#fff" stroke-width="1.500"/></svg>
                <svg viewBox="0 0 20 22"><path d="M10 4h8v16h-8zM12 2h4" fill="none" stroke="#fff" stroke-width="1.500"/><path d="M12 10h4v8h-4z" fill="#fff"/><path d="M2 2v4M6 2v4M1 7h6v3H1zM4 10v10" fill="#fff" stroke="#fff"/></svg>
                <svg viewBox="0 0 20 22"><path d="M3 20v-4M7 20v-7M11 20V10M15 20V6M19 20V2" stroke="#fff" stroke-width="2"/></svg>
                <svg viewBox="0 0 20 22"><path d="M1 8h3l5-6v18l-5-6H1z" fill="#fff"/><path d="M12 7q2 4 0 8M15 5q4 6 0 12" fill="none" stroke="#fff"/></svg>
            </div>
            <span class="lang">ENG</span>
            <div class="clock"><span>11:07 AM</span><span>5/1/2020</span></div>
        </div>
    </div>

    <script src="script.js"></script>
</body>
</html>
```
FILE: styles.css
```css
* {
    margin: 0;
    padding: 0;
    box-sizing: border-box;
}

body {
    font-family: 'DejaVu Sans Condensed', 'DejaVu Sans', sans-serif;
    font-size: 14px;
    color: #222;
    background: #efefef;
    height: 100vh;
    display: flex;
    flex-direction: column;
    overflow: hidden;
}

button {
    font: inherit;
    color: inherit;
    background: none;
    border: none;
}

.defs {
    position: absolute;
}

/* Title bar */
.titlebar {
    height: 34px;
    flex: none;
    display: flex;
    background: #d18d72;
    border-bottom: 1px solid #b8796a;
}

.title-icon {
    width: 20px;
    height: 21px;
    margin: 7px 0 0 2px;
}

.titlebar h1 {
    flex: 1;
    min-width: 0;
    padding-right: 25px;
    text-align: right;
    font-family: Roboto, sans-serif;
    font-size: 22px;
    font-weight: 500;
    line-height: 37px;
    white-space: nowrap;
    color: #282828;
}

.window-buttons {
    display: flex;
    align-items: flex-start;
    padding-right: 3px;
}

.win {
    width: 38px;
    height: 29px;
}

.win-close {
    width: 67px;
    background: #c75050;
}

/* Menu */
.menubar {
    height: 27px;
    flex: none;
    display: flex;
    align-items: center;
    gap: 10px;
    padding: 0 2px 0 5px;
    background: #f5f6f8;
}

.menubar a {
    padding-top: 2px;
    font-size: 15px;
    color: #222;
    text-decoration: none;
}

.search {
    margin-left: auto;
    width: 192px;
    height: 25px;
    display: flex;
    align-items: center;
    padding-left: 4px;
    border: 2px solid #8aa5c0;
    background: #f0f0f0;
}

.search input {
    width: 100%;
    height: 21px;
    margin-left: 2px;
    padding-left: 4px;
    border: none;
    font: inherit;
}

/* Toolbar */
.toolbar {
    height: 48px;
    flex: none;
    display: flex;
    align-items: center;
    padding-bottom: 10px;
}

.toolbar button {
    width: 29px;
    height: 32px;
    flex: none;
    display: flex;
    align-items: center;
    justify-content: center;
}

.toolbar svg {
    width: 24px;
    height: 24px;
}

.toolbar .lg {
    width: 39px;
}

.toolbar .lg svg {
    width: 30px;
    height: 30px;
}

.toolbar .more {
    width: 18px;
}

.toolbar .more svg {
    width: 10px;
    height: 14px;
}

.sep {
    width: 8px;
    height: 28px;
    flex: none;
    background: repeating-linear-gradient(#b4b4b4 0 3px, transparent 3px 6px) 4px 0 / 2px 100% no-repeat;
}

.sep.tight {
    width: 4px;
    background-position: 0 0;
}

.sep.last {
    margin-left: auto;
}

.memory {
    width: 122px;
    height: 31px;
    margin-left: 6px;
    flex: none;
    border: 1px solid #b8b8a4;
    background: repeating-linear-gradient(90deg, transparent 0 5px, #ffffff30 5px 6px), linear-gradient(#c8c8b4 0, #c0c0a0 55%, transparent 0), linear-gradient(90deg, #bccc9c 40%, #6e6c14);
    color: #fff;
    text-align: right;
    font: bold 13px/30px 'DejaVu Sans Condensed', sans-serif;
    padding-right: 5px;
}

.glyph {
    font: bold 12px 'DejaVu Sans Condensed', sans-serif;
    fill: #5050a0;
}

.gcp {
    font: bold 13px 'Liberation Sans', sans-serif;
    fill: #555;
}

.dim {
    fill: #999;
}

.bits {
    font: bold 10px 'Liberation Serif', serif;
    fill: #444;
}

/* Workspace */
.workspace {
    flex: 1;
    min-height: 0;
    display: grid;
    grid-template-columns: 36.5% 1fr 31px;
}

.sidebar {
    display: flex;
    flex-direction: column;
    gap: 4px;
    padding: 0 0 0 4px;
    min-height: 0;
}

.panel {
    border: 2px solid #a0a0aa;
    border-top-width: 1px;
    border-left-width: 1px;
    display: flex;
    flex-direction: column;
}

.tabs {
    display: flex;
    height: 26px;
    flex: none;
    border-top: 1px solid #9a9aa6;
    border-bottom: 2px solid #a0a0aa;
    background: linear-gradient(#f2f2f2, #e2e2e2);
}

.tab {
    font: bold 14px 'Liberation Sans', sans-serif;
    text-align: left;
    white-space: nowrap;
    padding: 0 5px;
    border-right: 2px solid #a0a0aa;
}

.tab.active {
    background: #fff;
    display: flex;
    align-items: center;
    justify-content: space-between;
    gap: 8px;
}

.tab-pixel {
    width: 94px;
}

.tab-projects {
    width: 91px;
}

.tab-uncertainty {
    width: 201px;
}

.tab-colour {
    width: 235px;
}

.tab-view {
    width: 111px;
}

.tab-map {
    width: 105px;
}

.tab-fill {
    flex: 1;
}

.minimize {
    width: 12px;
    height: 3px;
    margin: 11px 7px 0 0;
    background: #555;
}

/* Product tree */
.tree-wrap {
    display: flex;
    height: 423px;
    overflow: hidden;
    background: #fff;
}

.tree {
    flex: 1;
    height: 427px;
    margin-top: -4px;
    padding-left: 0;
    display: grid;
    grid-auto-rows: 1fr;
    list-style: none;
}

.tree li {
    display: flex;
    align-items: center;
    white-space: nowrap;
}

.tree b {
    width: 24px;
    height: 100%;
    flex: none;
    display: flex;
    align-items: center;
    justify-content: center;
    background-repeat: no-repeat;
}

.tree .v,
.tree .t,
.tree .l {
    background-image: repeating-linear-gradient(#aaa 0 1px, transparent 1px 3px), repeating-linear-gradient(90deg, #aaa 0 1px, transparent 1px 3px);
    background-position: 11px 0, 12px 50%;
}

.tree .v {
    background-size: 1px 100%, 0 0;
}

.tree .t {
    background-size: 1px 100%, 12px 1px;
}

.tree .l {
    background-size: 1px 50%, 12px 1px;
}

.tree span {
    margin-left: 5px;
    padding: 0 3px 0 1px;
    line-height: 21px;
}

.tree .root {
    margin-left: 7px;
}

.tree .selected {
    background: #e2e2e2;
}

.ex {
    width: 12px;
    height: 12px;
}

.fo {
    width: 20px;
    height: 18px;
}

.bd {
    width: 18px;
    height: 20px;
}

.scrollbar {
    width: 19px;
    display: flex;
    flex-direction: column;
    background: #f0f0f0;
}

.scrollbar svg {
    height: 21px;
    padding: 5px 3px;
}

.thumb {
    flex: 1;
    margin-top: 133px;
    background: #cdcdcd;
}

/* Colour manipulation */
.colour {
    flex: 1;
    min-height: 0;
}

.colour-body {
    flex: 1;
    display: flex;
    min-height: 0;
}

.colour-main {
    flex: 1;
    display: flex;
    flex-direction: column;
    padding: 8px 0 3px 6px;
}

.editor-row {
    display: flex;
    align-items: center;
    gap: 10px;
    height: 26px;
}

.editor-row span {
    margin-right: -2px;
}

.editor-row label {
    display: flex;
    align-items: center;
    gap: 3px;
}

.editor-row input {
    appearance: none;
    width: 17px;
    height: 17px;
    border: 1px solid #777;
    border-radius: 50%;
    background: #fff;
}

.editor-row input:checked {
    background: radial-gradient(circle, #222 0 4px, #fff 5px);
}

.chart {
    position: relative;
    height: 234px;
    margin: 9px 12px 0 12px;
    border: 2px solid #555;
}

.plot {
    display: block;
    width: 100%;
    height: 100%;
}

.stats {
    position: absolute;
    top: 4px;
    right: 1px;
    padding-right: 4px;
    background: #ffffff70;
    line-height: 18px;
}

.rough {
    color: #8c1020;
}

.ramp {
    height: 22px;
    margin: 2px 12px 0 12px;
    border: 2px solid #555;
    background: linear-gradient(90deg, #6d3ba8 3%, #d8379c 16%, #ff7046 30%, #c8cc30 43%, #50f468 57%, #1cc8b4 70%, #3c80dc 83%, #6446b8 97%);
}

.markers {
    flex: 1;
    display: flex;
    justify-content: space-between;
    margin: -9px 21px 0 21px;
    font: 13px 'DejaVu Sans', sans-serif;
}

.markers div {
    width: 18px;
    display: flex;
    align-items: center;
    writing-mode: vertical-rl;
    gap: 3px;
}

.markers svg {
    width: 18px;
    height: 16px;
    flex: none;
    stroke: #222;
    stroke-width: 1;
}

.markers .edge svg {
    stroke: #fff;
}

.more-options {
    display: flex;
    align-items: center;
    gap: 6px;
    height: 24px;
    padding-left: 4px;
}

.more-options span {
    margin-left: 4px;
}

.more-options hr {
    flex: 1;
    border: none;
    border-top: 2px solid #c8c8c8;
}

.colour-tools {
    width: 76px;
    display: grid;
    grid-template-columns: 34px 34px;
    grid-template-rows: repeat(7, 33px) 1fr;
    padding: 5px 0 6px 3px;
}

.colour-tools button {
    display: flex;
    align-items: center;
    justify-content: center;
}

.colour-tools svg {
    width: 28px;
    height: 28px;
    overflow: visible;
}

.colour-tools .on {
    border: 1px solid #c89c54;
    background: #ffcd80;
}

.colour-tools .help {
    grid-area: 8 / 2;
    align-self: end;
}

.tiny {
    font: 11px 'DejaVu Sans Condensed', sans-serif;
    fill: #33338c;
}

.strong {
    font-weight: bold;
}

.log {
    font: bold 11px 'Noto Sans', sans-serif;
    fill: #33338c;
}

.q {
    font: bold 18px 'Liberation Sans', sans-serif;
    fill: #fff;
}

/* Image editor */
.editor {
    display: flex;
    flex-direction: column;
    margin-left: 6px;
    min-width: 0;
}

.doc-tabs {
    display: flex;
    height: 25px;
    flex: none;
}

.doc-tab {
    display: flex;
    align-items: center;
    gap: 6px;
    padding: 0 4px 0 4px;
    border: 1px solid #9a9aa6;
    border-bottom: none;
    background: linear-gradient(#f2f2f2, #e2e2e2);
}

.doc-tab span {
    margin-right: 3px;
}

.doc-tab.active {
    border: 2px solid #6a9cc4;
    border-bottom: none;
    background: #dcecfa;
}

.doc-nav {
    margin-left: auto;
    display: flex;
    gap: 8px;
    padding: 2px 2px 0 0;
}

.doc-nav svg {
    width: 14px;
    height: 14px;
}

.view {
    flex: 1;
    display: flex;
    flex-direction: column;
    position: relative;
    background: #333;
}

.view::after {
    content: '';
    position: absolute;
    inset: 0;
    border: 1px solid #9a9a9c;
    border-width: 1px 2px 2px 1px;
    box-shadow: inset 0 0 5px 3px #cfa93c, inset 0 0 2px 2px #cfa93c;
    opacity: 0.9;
}

.compass {
    width: 120px;
    height: 150px;
    margin: 5px 0 0 7px;
    overflow: visible;
}

#phase {
    width: 100%;
    height: 76px;
    margin-top: 241px;
    border: solid #86b048;
    border-width: 2px 0;
}

.dock {
    display: flex;
    flex-direction: column;
    align-items: center;
    gap: 8px;
    padding: 9px 0 0 2px;
}

.dock span {
    writing-mode: vertical-rl;
    font-size: 13px;
}

/* Status bar */
.statusbar {
    height: 29px;
    flex: none;
    display: flex;
    justify-content: flex-end;
}

.cell {
    display: flex;
    align-items: center;
    justify-content: center;
    border-left: 2px solid #b0b0b0;
    margin-top: 2px;
}

.xy {
    width: 152px;
    gap: 19px;
}

.latlon {
    width: 253px;
    gap: 27px;
}

.zoom {
    width: 193px;
    gap: 6px;
    padding-right: 4px;
}

.xy span:nth-child(3) {
    margin-left: -12px;
}

.latlon span:nth-child(3) {
    margin-left: -20px;
}

/* Taskbar */
.taskbar {
    height: 48px;
    flex: none;
    display: flex;
    align-items: center;
    color: #fff;
    font: 14px 'Open Sans', sans-serif;
    border-top: 1px solid #8a7468;
    background: linear-gradient(90deg, #5e4539, #66503f 25%, #5c4136 45%, #563c32 70%, #6d5141 76%, #5b4036 82%, #50352e);
}

.start {
    width: 59px;
    height: 47px;
    padding: 6px 0 0 1px;
}

.grip {
    width: 12px;
    height: 36px;
    background: radial-gradient(circle, #cbbfb8 0 1px, transparent 1px) 0 0 / 4px 7px;
}

.task {
    width: 69px;
    height: 47px;
    margin-right: 4px;
    display: flex;
    align-items: center;
    justify-content: center;
}

.grip + .task {
    margin-left: 10px;
}

.running {
    border: 1px solid #a3938a;
    background: #ffffff30;
}

.current {
    border-color: #eee;
    box-shadow: 2px 0 0 #9c8c84, 3px 0 0 #eee;
    background: #ffffff60;
}

.badge {
    font: 12px 'Open Sans', sans-serif;
    fill: #fff;
}

.word {
    font: bold 18px 'Liberation Sans', sans-serif;
    fill: #fff;
}

.pro {
    font: 10px 'Open Sans', sans-serif;
    fill: #fff;
}

.skype {
    font: bold 25px 'Open Sans', sans-serif;
    fill: #fff;
}

.pct {
    font: 13px 'Open Sans', sans-serif;
    fill: #fff;
}

.tray {
    margin-left: auto;
    display: flex;
    align-items: center;
    gap: 6px;
    padding-right: 20px;
}

.band,
.clock {
    font-size: 15px;
}

.address {
    width: 288px;
    height: 24px;
    display: flex;
    align-items: center;
    background: #fff;
}

.address input {
    flex: 1;
    min-width: 0;
    height: 24px;
    border: none;
}

.address button {
    width: 28px;
    height: 24px;
    margin-left: 5px;
    border-left: 1px solid #ccc;
}

.tray-icons {
    display: flex;
    gap: 10px;
    margin-left: 1px;
}

.tray-icons svg {
    width: 20px;
    height: 22px;
}

.lang {
    margin: 0 13px 0 12px;
}

.clock {
    display: flex;
    flex-direction: column;
    align-items: center;
    line-height: 22px;
}
```
FILE: script.js
```js
// Small seeded generator so that the raster is the same on every load
let seed = 7;
function rnd() {
    seed = (seed * 1664525 + 1013904223) % 4294967296;
    return seed / 4294967296;
}

const palette = [[109, 59, 168], [216, 55, 156], [255, 112, 70], [200, 204, 48], [80, 244, 104], [28, 200, 180], [60, 128, 220]];

function phaseColor(t) {
    t = ((t % 7) + 7) % 7;
    const i = Math.floor(t);
    const f = t - i;
    const a = palette[i];
    const b = palette[(i + 1) % 7];
    return a.map((c, k) => c + (b[k] - c) * f);
}

// Mean phase along the swath: [x, palette index]
const trend = [[0, -0.5], [150, -0.5], [260, -0.3], [330, 0.3], [400, 1.3], [470, 2.5], [560, 3], [650, 3.6], [740, 4.3], [850, 4.9], [1000, 5], [1180, 4.6]];

// Local fringes: x, y, radius x, radius y, phase change
const fringes = [
    [25, 31, 70, 9, -2.8], [20, 33, 26, 4, -1.2], [100, 22, 60, 6, -2.4], [50, 64, 85, 6, -3], [230, 30, 60, 4, -2],
    [220, 13, 45, 6, 3], [20, 48, 60, 4, 1.6], [130, 38, 60, 4, 1.4], [220, 49, 30, 6, 2.6], [20, 12, 50, 5, 1],
    [190, 2, 70, 3, -2.4], [330, 68, 80, 6, -2.8], [330, 40, 50, 5, -1], [360, 28, 60, 6, 1.2], [500, 46, 80, 5, 1.8],
    [480, 33, 60, 4, -1.4], [450, 60, 80, 5, -2.2], [370, 10, 60, 6, 1.5], [650, 59, 70, 5, -3], [620, 20, 50, 5, -2],
    [600, 38, 60, 8, -1], [600, 4, 60, 4, -2], [1035, 21, 40, 6, 1.9], [830, 22, 50, 6, 0.9], [835, 48, 50, 6, 0.9],
    [970, 56, 70, 5, -1.8], [1040, 42, 60, 5, -0.6], [820, 40, 60, 3, -1], [330, 50, 60, 5, 1.4]
];

function trendAt(x) {
    for (let i = 1; i < trend.length; i++) {
        if (x <= trend[i][0]) {
            const [x0, t0] = trend[i - 1];
            const [x1, t1] = trend[i];
            return t0 + (t1 - t0) * (x - x0) / (x1 - x0);
        }
    }
    return trend[trend.length - 1][1];
}

// Smooth noise, stretched along x
function makeNoise(sx, sy) {
    const cols = Math.ceil(1200 / sx) + 2;
    const cells = Array.from({ length: cols * (Math.ceil(80 / sy) + 2) }, () => rnd() * 2 - 1);
    return function (x, y) {
        const u = x / sx, v = y / sy;
        const i = Math.floor(u), j = Math.floor(v);
        const a = (u - i) * (u - i) * (3 - 2 * (u - i));
        const b = (v - j) * (v - j) * (3 - 2 * (v - j));
        const top = cells[j * cols + i] * (1 - a) + cells[j * cols + i + 1] * a;
        const low = cells[(j + 1) * cols + i] * (1 - a) + cells[(j + 1) * cols + i + 1] * a;
        return top * (1 - b) + low * b;
    };
}

function drawPhase() {
    const canvas = document.getElementById('phase');
    const ctx = canvas.getContext('2d');
    const img = ctx.createImageData(canvas.width, canvas.height);
    const big = makeNoise(50, 9);
    const mid = makeNoise(18, 4);
    const fine = makeNoise(7, 2);
    const coherence = makeNoise(40, 6);
    for (let py = 0; py < canvas.height; py++) {
        for (let px = 0; px < canvas.width; px++) {
            const x = px * 1.4, y = py * 1.4;
            let t = trendAt(x) + big(x, y) * 0.7 + mid(x, y) * 0.7 + fine(x, y) * 0.5;
            for (const [fx, fy, rx, ry, d] of fringes) {
                const dx = (x - fx) / rx;
                const dy = (y - fy + (x - fx) * 0.05) / ry;
                t += d * Math.exp(-(dx * dx + dy * dy));
            }
            t += (rnd() + rnd() - 1) * 0.8;
            const loss = 0.08 + Math.max(0, coherence(x, y)) * (x > 250 ? 0.6 : 0.25);
            if (rnd() < loss) {
                t += (rnd() - 0.5) * 5;
            }
            const c = phaseColor(t);
            const o = (py * canvas.width + px) * 4;
            img.data[o] = c[0];
            img.data[o + 1] = c[1];
            img.data[o + 2] = c[2];
            img.data[o + 3] = 255;
        }
    }
    ctx.putImageData(img, 0, 0);
}

function drawHistogram() {
    let d = 'M0 230';
    for (let x = 0; x <= 586; x++) {
        const hump = 8 * Math.exp(-Math.pow((x - 395) / 90, 2));
        const h = 5 + hump + rnd() * 5;
        d += 'L' + x + ' ' + (230 - h).toFixed(1);
    }
    document.getElementById('hist').setAttribute('d', d + 'L586 230Z');
}

drawPhase();
drawHistogram();
```
